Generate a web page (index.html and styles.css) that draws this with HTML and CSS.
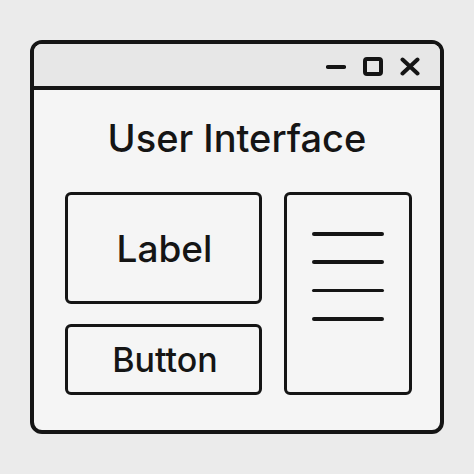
FILE: index.html
```html
<!DOCTYPE html>
<html lang="en">
<head>
<meta charset="utf-8">
<title>User Interface</title>
<link rel="stylesheet" href="styles.css">
</head>
<body>
<div class="window">
  <div class="titlebar">
    <div class="controls">
      <svg class="ctl ctl-min" width="20" height="18" viewBox="0 0 20 18"><line x1="2" y1="9" x2="18" y2="9" stroke="#151515" stroke-width="4.2" stroke-linecap="round"/></svg>
      <svg class="ctl ctl-max" width="20" height="19" viewBox="0 0 20 19"><rect x="2" y="2" width="16" height="15" rx="2" fill="none" stroke="#151515" stroke-width="4"/></svg>
      <svg class="ctl ctl-close" width="20" height="19" viewBox="0 0 20 19"><path d="M2.5 2.5 L17.5 16.5 M17.5 2.5 L2.5 16.5" stroke="#151515" stroke-width="4" stroke-linecap="round"/></svg>
    </div>
  </div>
  <div class="content">
    <h1 class="heading">User Interface</h1>
    <div class="layout">
      <div class="box box-label"><span class="label-text">Label</span></div>
      <div class="box box-button"><span class="button-text">Button</span></div>
      <div class="box box-list">
        <div class="line"></div>
        <div class="line"></div>
        <div class="line"></div>
        <div class="line"></div>
      </div>
    </div>
  </div>
</div>
</body>
</html>
```
FILE: styles.css
```css
html, body {
  margin: 0;
  padding: 0;
}
body {
  background: #ebebeb;
  width: 474px;
  height: 474px;
  font-family: Inter, "Noto Sans", sans-serif;
  color: #151515;
}
.window {
  box-sizing: border-box;
  margin: 40px 0 0 30px;
  width: 414px;
  height: 394px;
  border: 4px solid #151515;
  border-radius: 12px;
  background: #f5f5f5;
  overflow: hidden;
  display: flex;
  flex-direction: column;
}
.titlebar {
  height: 42px;
  background: #e7e7e7;
  border-bottom: 4px solid #151515;
  display: flex;
  justify-content: flex-end;
  align-items: center;
  padding-right: 20px;
}
.controls {
  display: flex;
  align-items: center;
  gap: 17px;
  margin-top: 3px;
}
.ctl { display: block; }
.content {
  flex: 1;
  display: flex;
  flex-direction: column;
  align-items: center;
}
.heading {
  margin: 26px 0 0 0;
  font-size: 38px;
  font-weight: 550;
  line-height: 44px;
  letter-spacing: 0;
}
.layout {
  margin-top: 32px;
  margin-left: 2px;
  display: grid;
  grid-template-columns: 197px 128px;
  grid-template-rows: 112px 71px;
  column-gap: 22px;
  row-gap: 20px;
}
.box {
  box-sizing: border-box;
  border: 3.6px solid #151515;
  border-radius: 6px;
  display: flex;
  align-items: center;
  justify-content: center;
}
.box-list {
  grid-column: 2;
  grid-row: 1 / span 2;
  flex-direction: column;
  justify-content: flex-start;
  padding-top: 37px;
  gap: 24.8px;
}
.line {
  width: 72px;
  height: 3.6px;
  border-radius: 2px;
  background: #151515;
}
.label-text {
  font-size: 37px;
  font-weight: 550;
  margin-left: 3px;
}
.button-text {
  font-size: 34px;
  font-weight: 550;
  margin-left: 4px;
}
```
